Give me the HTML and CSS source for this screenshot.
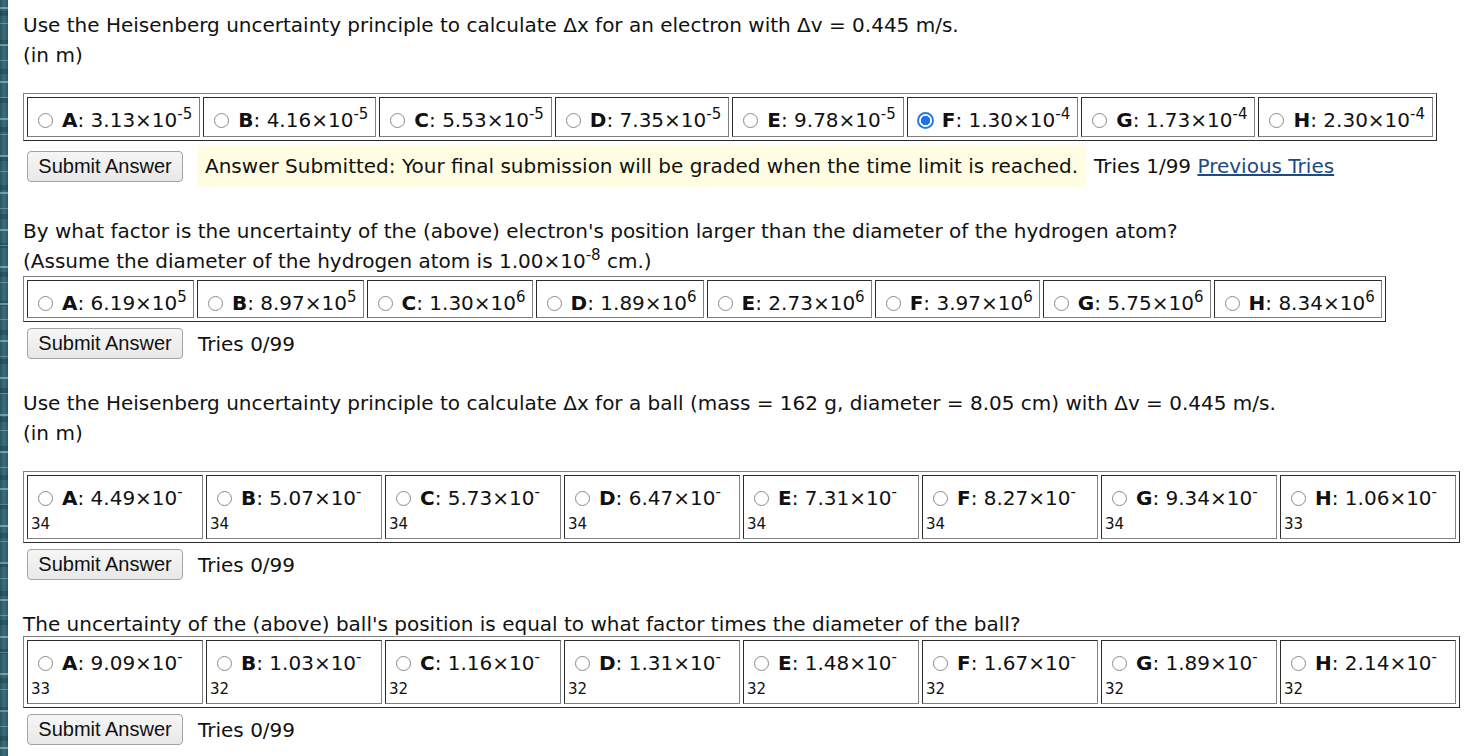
FILE: index.html
```html
<!DOCTYPE html>
<html lang="en">
<head>
<meta charset="utf-8">
<title>Heisenberg uncertainty</title>
<link rel="stylesheet" href="styles.css">
</head>
<body>
<div class="frame">
  <div class="strip"></div>
  <main class="content">

    <section class="problem first">
      <div class="question">Use the Heisenberg uncertainty principle to calculate Δx for an electron with Δv = 0.445 m/s.<br>(in m)</div>
      <table class="choices neg gap-above">
        <tr>
          <td><span class="radio"></span><b>A</b>: 3.13×10<sup>-5</sup></td>
          <td><span class="radio"></span><b>B</b>: 4.16×10<sup>-5</sup></td>
          <td><span class="radio"></span><b>C</b>: 5.53×10<sup>-5</sup></td>
          <td><span class="radio"></span><b>D</b>: 7.35×10<sup>-5</sup></td>
          <td><span class="radio"></span><b>E</b>: 9.78×10<sup>-5</sup></td>
          <td><span class="radio checked"></span><b>F</b>: 1.30×10<sup>-4</sup></td>
          <td><span class="radio"></span><b>G</b>: 1.73×10<sup>-4</sup></td>
          <td><span class="radio"></span><b>H</b>: 2.30×10<sup>-4</sup></td>
        </tr>
      </table>
      <div class="answer-row tall">
        <button class="submit" type="button">Submit Answer</button>
        <span class="notice">Answer Submitted: Your final submission will be graded when the time limit is reached.</span>
        <span class="tries">Tries 1/99 <a href="#" class="prev">Previous Tries</a></span>
      </div>
    </section>

    <section class="problem">
      <div class="question">By what factor is the uncertainty of the (above) electron's position larger than the diameter of the hydrogen atom?<br>(Assume the diameter of the hydrogen atom is 1.00×10<sup>-8</sup> cm.)</div>
      <table class="choices short">
        <tr>
          <td><span class="radio"></span><b>A</b>: 6.19×10<sup>5</sup></td>
          <td><span class="radio"></span><b>B</b>: 8.97×10<sup>5</sup></td>
          <td><span class="radio"></span><b>C</b>: 1.30×10<sup>6</sup></td>
          <td><span class="radio"></span><b>D</b>: 1.89×10<sup>6</sup></td>
          <td><span class="radio"></span><b>E</b>: 2.73×10<sup>6</sup></td>
          <td><span class="radio"></span><b>F</b>: 3.97×10<sup>6</sup></td>
          <td><span class="radio"></span><b>G</b>: 5.75×10<sup>6</sup></td>
          <td><span class="radio"></span><b>H</b>: 8.34×10<sup>6</sup></td>
        </tr>
      </table>
      <div class="answer-row">
        <button class="submit" type="button">Submit Answer</button>
        <span class="tries">Tries 0/99</span>
      </div>
    </section>

    <section class="problem">
      <div class="question">Use the Heisenberg uncertainty principle to calculate Δx for a ball (mass = 162 g, diameter = 8.05 cm) with Δv = 0.445 m/s.<br>(in m)</div>
      <table class="choices full gap-above">
        <tr>
          <td><span class="radio"></span><b>A</b>: 4.49×10<sup>-</sup><span class="exp">34</span></td>
          <td><span class="radio"></span><b>B</b>: 5.07×10<sup>-</sup><span class="exp">34</span></td>
          <td><span class="radio"></span><b>C</b>: 5.73×10<sup>-</sup><span class="exp">34</span></td>
          <td><span class="radio"></span><b>D</b>: 6.47×10<sup>-</sup><span class="exp">34</span></td>
          <td><span class="radio"></span><b>E</b>: 7.31×10<sup>-</sup><span class="exp">34</span></td>
          <td><span class="radio"></span><b>F</b>: 8.27×10<sup>-</sup><span class="exp">34</span></td>
          <td><span class="radio"></span><b>G</b>: 9.34×10<sup>-</sup><span class="exp">34</span></td>
          <td><span class="radio"></span><b>H</b>: 1.06×10<sup>-</sup><span class="exp">33</span></td>
        </tr>
      </table>
      <div class="answer-row">
        <button class="submit" type="button">Submit Answer</button>
        <span class="tries">Tries 0/99</span>
      </div>
    </section>

    <section class="problem">
      <div class="question">The uncertainty of the (above) ball's position is equal to what factor times the diameter of the ball?</div>
      <table class="choices full tight">
        <tr>
          <td><span class="radio"></span><b>A</b>: 9.09×10<sup>-</sup><span class="exp">33</span></td>
          <td><span class="radio"></span><b>B</b>: 1.03×10<sup>-</sup><span class="exp">32</span></td>
          <td><span class="radio"></span><b>C</b>: 1.16×10<sup>-</sup><span class="exp">32</span></td>
          <td><span class="radio"></span><b>D</b>: 1.31×10<sup>-</sup><span class="exp">32</span></td>
          <td><span class="radio"></span><b>E</b>: 1.48×10<sup>-</sup><span class="exp">32</span></td>
          <td><span class="radio"></span><b>F</b>: 1.67×10<sup>-</sup><span class="exp">32</span></td>
          <td><span class="radio"></span><b>G</b>: 1.89×10<sup>-</sup><span class="exp">32</span></td>
          <td><span class="radio"></span><b>H</b>: 2.14×10<sup>-</sup><span class="exp">32</span></td>
        </tr>
      </table>
      <div class="answer-row">
        <button class="submit" type="button">Submit Answer</button>
        <span class="tries">Tries 0/99</span>
      </div>
    </section>

  </main>
</div>
</body>
</html>
```

FILE: styles.css
```css
html, body {
  margin: 0;
  padding: 0;
  background: #ffffff;
}

body {
  font-family: "DejaVu Sans", Verdana, sans-serif;
  font-size: 20px;
  color: #111;
  overflow: hidden;
}

.frame {
  display: flex;
  min-height: 756px;
}

.strip {
  flex: 0 0 8px;
  background-color: #2d5a66;
  background-image:
    repeating-linear-gradient(180deg, rgba(255,255,255,0) 0 7px, rgba(200,225,230,0.45) 7px 9px, rgba(255,255,255,0) 9px 23px, rgba(220,235,240,0.3) 23px 24px, rgba(255,255,255,0) 24px 37px),
    repeating-linear-gradient(180deg, rgba(20,50,60,0) 0 11px, rgba(20,50,60,0.35) 11px 16px, rgba(20,50,60,0) 16px 29px),
    linear-gradient(90deg, #2a5260, #3b6e7a 50%, #2a5868);
}

.content {
  width: 1437px;
  padding: 10px 0 0 15px;
}

.problem {
  margin-top: 29px;
}

.problem.first {
  margin-top: 0;
}

.question {
  line-height: 30px;
}

sup {
  font-size: 15px;
  line-height: 0;
  vertical-align: 8px;
}

.choices {
  border: 1px outset #808080;
  border-spacing: 3px;
  border-collapse: separate;
}

.choices.gap-above {
  margin-top: 23px;
}

.choices.tight {
  margin-top: -3px;
}

.choices.full {
  width: 100%;
  table-layout: fixed;
}

.choices td {
  border: 1px inset #808080;
  padding: 8px 6px 2px 3px;
  line-height: 28px;
  white-space: nowrap;
  vertical-align: top;
}

.choices.neg td {
  padding-right: 7px;
}

.choices.short td {
  padding-bottom: 0;
}

.choices .exp {
  display: block;
  font-size: 15px;
  line-height: 24px;
}

.radio {
  display: inline-block;
  box-sizing: border-box;
  width: 15px;
  height: 15px;
  margin: 0 9px 0 7px;
  border: 1px solid #8a8a8a;
  border-radius: 50%;
  background: #fff;
  vertical-align: -1px;
}

.radio.checked {
  width: 17px;
  height: 17px;
  margin: 0 8px 0 6px;
  border: 2px solid #2a7ae6;
  background: radial-gradient(circle, #1f72e8 0 4.5px, #ffffff 5px);
  vertical-align: -2px;
}

.answer-row {
  display: flex;
  align-items: center;
  margin-top: 6px;
  height: 31px;
}

.answer-row.tall {
  margin-top: 4px;
  height: 42px;
}

.submit {
  font-family: "Liberation Sans", Arial, sans-serif;
  font-size: 20px;
  color: #111;
  height: 31px;
  width: 156px;
  margin: 0 15px 0 4px;
  padding: 0;
  background: linear-gradient(#f6f6f6, #e8e8e8);
  border: 1px solid #a3a3a3;
  border-radius: 4px;
}

.notice {
  background: #fffde2;
  height: 42px;
  line-height: 42px;
  padding: 0 8px;
  margin-left: -1px;
  margin-right: 8px;
}

.tries {
  line-height: 30px;
}

.prev {
  color: #1d4a82;
  text-decoration: underline;
}
```
